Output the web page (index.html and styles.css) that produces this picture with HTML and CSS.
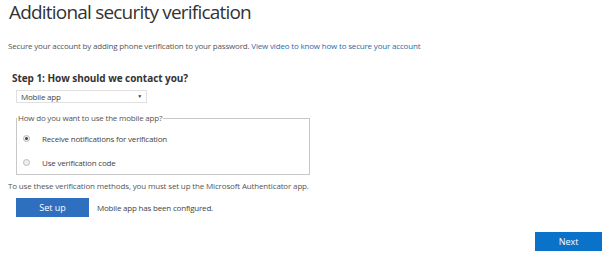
FILE: index.html
```html
<!DOCTYPE html>
<html>
<head>
<meta charset="utf-8">
<link rel="stylesheet" href="styles.css">
</head>
<body>
<div class="page">
  <h1 class="title">Additional security verification</h1>
  <p class="intro">Secure your account by adding phone verification to your password. <a class="link" href="#">View video to know how to secure your account</a></p>
  <h2 class="step">Step 1: How should we contact you?</h2>
  <div class="select"><span>Mobile app</span><span class="arrow">▼</span></div>
  <fieldset class="box">
    <legend class="legend">How do you want to use the mobile app?</legend>
    <label class="opt"><span class="radio on"></span>Receive notifications for verification</label>
    <label class="opt opt-last"><span class="radio"></span>Use verification code</label>
  </fieldset>
  <p class="note">To use these verification methods, you must set up the Microsoft Authenticator app.</p>
  <div class="setup-row">
    <button class="btn setup">Set up</button>
    <span class="status">Mobile app has been configured.</span>
  </div>
  <div class="footer">
    <button class="btn next">Next</button>
  </div>
</div>
</body>
</html>
```
FILE: styles.css
```css
* { box-sizing: border-box; }
html, body { margin: 0; padding: 0; background: #fff; }
body { font-family: "Open Sans", "Noto Sans", sans-serif; color: #444; }
.page { padding: 0 10px 0 8px; width: 612px; }
.title { margin: 0; padding: 0 0 0 1px; font-size: 19px; font-weight: 400; color: #333; line-height: 25px; letter-spacing: -0.8px; }
.intro { margin: 15px 0 0; font-size: 8px; line-height: 12px; color: #555; letter-spacing: -0.18px; }
.link { color: #2c6aa8; text-decoration: none; }
.step { margin: 19px 0 0 4px; font-size: 10px; font-weight: 700; color: #333; line-height: 14px; letter-spacing: -0.05px; }
.select { margin: 5px 0 0 8px; width: 131px; height: 13px; border: 1px solid #e0e0e0; font-size: 8px; line-height: 11px; padding: 0 4px; color: #444; display: flex; justify-content: space-between; align-items: center; letter-spacing: -0.2px; }
.arrow { font-size: 5px; color: #333; }
.box { margin: 10px 0 0 8px; width: 294px; border: 1px solid #c8c8c8; padding: 4px 0 0 6px; }
.legend { font-size: 8px; color: #555; padding: 0 1px; margin-left: -6px; line-height: 10px; letter-spacing: -0.2px; }
.opt { display: flex; align-items: center; font-size: 8px; color: #444; height: 22px; letter-spacing: -0.2px; }
.opt-last { height: 25px; padding-top: 2px; }
.radio { width: 7px; height: 7px; border-radius: 50%; border: 1px solid #bbb; background: #eee; margin-right: 12px; position: relative; }
.radio.on::after { content: ""; position: absolute; left: 1px; top: 1px; width: 3px; height: 3px; border-radius: 50%; background: #444; }
.note { margin: 5px 0 0; font-size: 8px; line-height: 12px; color: #555; letter-spacing: -0.15px; }
.setup-row { display: flex; align-items: center; margin: 6px 0 0 8px; }
.btn { border: 0; color: #fff; font-family: inherit; font-size: 9px; padding: 0; }
.setup { width: 73px; height: 19px; background: #2f6fbf; margin-right: 8px; }
.status { font-size: 8px; color: #444; letter-spacing: -0.2px; }
.footer { display: flex; justify-content: flex-end; margin-top: 15px; }
.next { width: 67px; height: 19px; background: #0a72c8; }
```
